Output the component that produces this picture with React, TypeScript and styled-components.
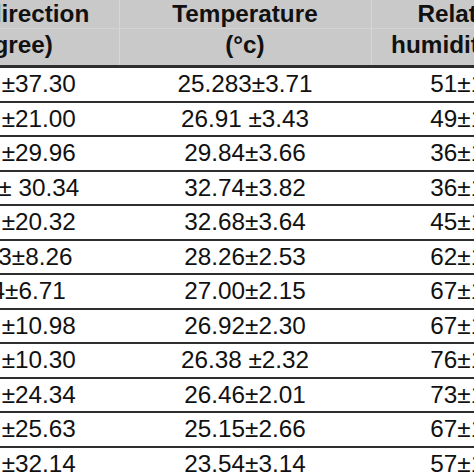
import React from "react";
import styled, { createGlobalStyle } from "styled-components";

const Global = createGlobalStyle`
  html, body { margin: 0; padding: 0; background: #ffffff; }
  body { width: 474px; height: 474px; overflow: hidden; }
  #root { width: 474px; height: 474px; overflow: hidden; }
`;

const Table = styled.div`
  margin-left: -109px;
  width: 666px;
  display: grid;
  grid-template-columns: 228px 252px 186px;
  font-family: "Liberation Sans", Arial, sans-serif;
  color: #111;
`;

const HeadCell = styled.div`
  background: #c9c9c9;
  height: 60px;
  border-bottom: 3px solid #2e2e2e;
  display: flex;
  flex-direction: column;
  justify-content: flex-end;
  align-items: center;
  padding-bottom: 5px;
  box-sizing: content-box;
  overflow: hidden;
  font-weight: 700;
  font-size: 24.3px;
  line-height: 31px;
  position: relative;
  & + & {
    box-shadow: inset 1px 0 0 #d6d6d6;
  }
`;

const HeadSplit = styled.div`
  position: absolute;
  left: 0;
  right: 0;
  top: 28px;
  height: 1px;
  background: #d4d4d4;
`;

const HeadLine = styled.span`
  white-space: nowrap;
  position: relative;
`;

const Cell = styled.div`
  height: 32.5px;
  border-bottom: 2px solid #2e2e2e;
  display: flex;
  align-items: center;
  justify-content: center;
  font-size: 24.3px;
  white-space: nowrap;
  overflow: hidden;
`;

const headers: [string, string][] = [
  ["Wind direction", "(degree)"],
  ["Temperature", "(°c)"],
  ["Relative", "humidity (%)"],
];

const rows: [string, string, string][] = [
  ["183.5 ±37.30", "25.283±3.71", "51±10"],
  ["196.4 ±21.00", "26.91 ±3.43", "49±10"],
  ["205.6 ±29.96", "29.84±3.66", "36±10"],
  ["212.0 ± 30.34", "32.74±3.82", "36±10"],
  ["226.1 ±20.32", "32.68±3.64", "45±10"],
  ["241.83±8.26", "28.26±2.53", "62±10"],
  ["36.44±6.71", "27.00±2.15", "67±10"],
  ["218.7 ±10.98", "26.92±2.30", "67±10"],
  ["207.1 ±10.30", "26.38 ±2.32", "76±10"],
  ["198.6 ±24.34", "26.46±2.01", "73±10"],
  ["187.9 ±25.63", "25.15±2.66", "67±10"],
  ["179.2 ±32.14", "23.54±3.14", "57±10"],
];

export default function App() {
  return (
    <>
      <Global />
      <Table>
        {headers.map(([a, b]) => (
          <HeadCell key={a}>
            <HeadSplit />
            <HeadLine>{a}</HeadLine>
            <HeadLine>{b}</HeadLine>
          </HeadCell>
        ))}
        {rows.map((r, i) =>
          r.map((v, j) => <Cell key={`${i}-${j}`}>{v}</Cell>)
        )}
      </Table>
    </>
  );
}
